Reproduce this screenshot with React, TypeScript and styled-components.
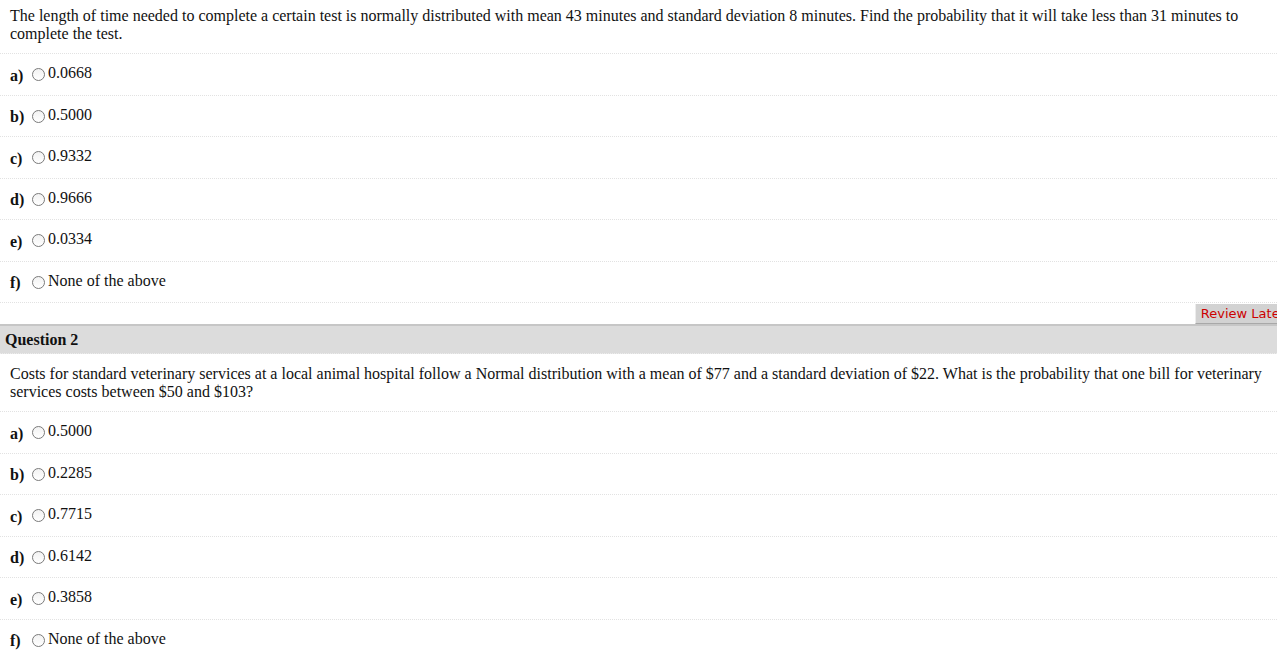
import React from "react";
import styled, { createGlobalStyle } from "styled-components";

const GlobalStyle = createGlobalStyle`
  html, body {
    margin: 0;
    padding: 0;
    background: #fff;
    overflow: hidden;
  }
  body {
    font-family: "Liberation Serif", "Times New Roman", serif;
    color: #111;
  }
`;

const Page = styled.div`
  width: 1291px;
  display: flex;
  flex-direction: column;
`;

const QuestionText = styled.div<{ $top: number; $bottom: number }>`
  padding: ${(p) => p.$top}px 10px ${(p) => p.$bottom}px 10px;
  font-size: 16px;
  line-height: 18px;
  border-bottom: 1px dotted #e2e2e2;
`;

const OptionRow = styled.div`
  box-sizing: border-box;
  height: 41.5px;
  display: flex;
  align-items: center;
  padding-left: 10px;
  border-bottom: 1px dotted #e2e2e2;
`;

const Letter = styled.span`
  width: 21px;
  font-weight: bold;
  font-size: 16px;
  line-height: 18px;
  padding-top: 3px;
`;

const Radio = styled.span`
  box-sizing: border-box;
  width: 13px;
  height: 13px;
  margin: 1px 3px 0 1px;
  border: 1px solid #7a7a7a;
  border-radius: 50%;
  background: linear-gradient(#f2f2f2, #ffffff);
  flex-shrink: 0;
`;

const OptionText = styled.span`
  font-size: 16px;
  line-height: 18px;
  margin-top: -2px;
`;

const ReviewRow = styled.div`
  display: flex;
  justify-content: flex-end;
  padding-top: 1px;
`;

const ReviewButton = styled.button`
  font-family: "DejaVu Sans", Verdana, sans-serif;
  font-size: 13px;
  line-height: 17px;
  color: #cc0000;
  background: #d2d2d2;
  border: none;
  border-left: 1px solid #ececec;
  border-bottom: 1px solid #a8a8a8;
  padding: 1px 6px 1px 5px;
  margin: 0;
  cursor: pointer;
`;

const QuestionHeader = styled.div`
  box-sizing: border-box;
  height: 30px;
  background: #dcdcdc;
  border-top: 2px solid #c6c6c6;
  border-bottom: 1px dotted #ececec;
  padding: 2px 5px 0;
  font-weight: bold;
  font-size: 16px;
  line-height: 24px;
`;

type Question = {
  text: string;
  options: string[];
};

const q1: Question = {
  text:
    "The length of time needed to complete a certain test is normally distributed with mean 43 minutes and standard deviation 8 minutes. Find the probability that it will take less than 31 minutes to complete the test.",
  options: ["0.0668", "0.5000", "0.9332", "0.9666", "0.0334", "None of the above"],
};

const q2: Question = {
  text:
    "Costs for standard veterinary services at a local animal hospital follow a Normal distribution with a mean of $77 and a standard deviation of $22. What is the probability that one bill for veterinary services costs between $50 and $103?",
  options: ["0.5000", "0.2285", "0.7715", "0.6142", "0.3858", "None of the above"],
};

const letters = ["a)", "b)", "c)", "d)", "e)", "f)"];

const Options = ({ options }: { options: string[] }) => (
  <>
    {options.map((opt, i) => (
      <OptionRow key={i}>
        <Letter>{letters[i]}</Letter>
        <Radio />
        <OptionText>{opt}</OptionText>
      </OptionRow>
    ))}
  </>
);

export default function App() {
  return (
    <>
      <GlobalStyle />
      <Page>
        <QuestionText $top={7} $bottom={10}>
          {q1.text}
        </QuestionText>
        <Options options={q1.options} />
        <ReviewRow>
          <ReviewButton>Review Later</ReviewButton>
        </ReviewRow>
        <QuestionHeader>Question 2</QuestionHeader>
        <QuestionText $top={11} $bottom={10}>
          {q2.text}
        </QuestionText>
        <Options options={q2.options} />
      </Page>
    </>
  );
}
